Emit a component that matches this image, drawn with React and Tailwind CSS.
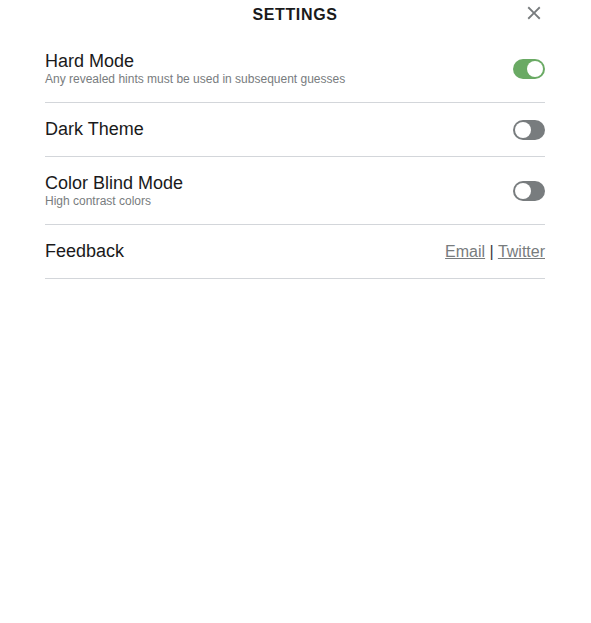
import React, { useState } from 'react';

function Toggle({ on, onChange }) {
  return (
    <button
      onClick={onChange}
      className={`flex h-5 w-8 shrink-0 items-center rounded-full p-[2px] ${on ? 'justify-end bg-[#6aaa64]' : 'justify-start bg-[#787c7e]'}`}
    >
      <span className="block h-4 w-4 rounded-full bg-white" />
    </button>
  );
}

function Setting({ title, description, children }) {
  return (
    <div className="flex items-center justify-between border-b border-[#d3d6da] py-4">
      <div>
        <div className="text-[18px] leading-[21px] text-[#1a1a1b]">{title}</div>
        {description && <div className="text-[12px] leading-[14px] text-[#787c7e]">{description}</div>}
      </div>
      {children}
    </div>
  );
}

export default function App() {
  const [hard, setHard] = useState(true);
  const [dark, setDark] = useState(false);
  const [colorBlind, setColorBlind] = useState(false);

  return (
    <div className="min-h-screen bg-white pl-[45px] pr-[46px] font-['Liberation_Sans',Arial,sans-serif]">
      <div className="w-[500px]">
        <div className="grid h-[35px] grid-cols-[1fr_auto_1fr] items-start">
          <div />
          <h1 className="pt-[6px] text-[16px] leading-[18px] font-bold tracking-[0.04em] text-[#1a1a1b] uppercase">Settings</h1>
          <div className="flex justify-end pt-[2px]">
            <button className="text-[#787c7e]">
              <svg width="22" height="22" viewBox="0 0 24 24" fill="currentColor">
                <path d="M19 6.41L17.59 5 12 10.59 6.41 5 5 6.41 10.59 12 5 17.59 6.41 19 12 13.41 17.59 19 19 17.59 13.41 12z" />
              </svg>
            </button>
          </div>
        </div>

        <Setting title="Hard Mode" description="Any revealed hints must be used in subsequent guesses">
          <Toggle on={hard} onChange={() => setHard(!hard)} />
        </Setting>
        <Setting title="Dark Theme">
          <Toggle on={dark} onChange={() => setDark(!dark)} />
        </Setting>
        <Setting title="Color Blind Mode" description="High contrast colors">
          <Toggle on={colorBlind} onChange={() => setColorBlind(!colorBlind)} />
        </Setting>
        <Setting title="Feedback">
          <div className="text-[16px] leading-[18px] text-[#3a3a3c]">
            <a href="#" className="text-[#787c7e] underline">Email</a>
            {' | '}
            <a href="#" className="text-[#787c7e] underline">Twitter</a>
          </div>
        </Setting>
      </div>
    </div>
  );
}
